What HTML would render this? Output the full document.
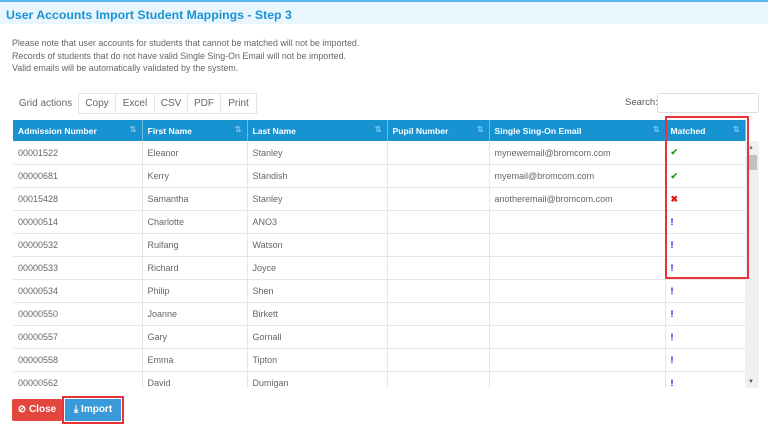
<!DOCTYPE html>
<html><head><meta charset="utf-8"><style>
*{box-sizing:border-box;margin:0;padding:0}
body{width:768px;height:432px;background:#fff;font-family:"Liberation Sans",sans-serif;position:relative;overflow:hidden;color:#555}
.title{position:absolute;left:0;top:0;width:768px;height:24px;background:#eaf6fd;border-top:2px solid #5bb8e8;color:#1a93d4;font-size:12.3px;font-weight:bold;padding:6px 0 0 6px}
.note{position:absolute;left:12px;top:37px;font-size:8.9px;line-height:12.5px;color:#666}
.ga{position:absolute;top:93px;height:21px;font-size:10px;color:#666;line-height:20px;text-align:center}
.btn{border:1px solid #e6e6e6;border-left:none}
.search{position:absolute;left:625px;top:97px;font-size:9.5px;color:#555}
.sin{position:absolute;left:657px;top:93px;width:102px;height:20px;border:1px solid #ddd;border-radius:2px}
table{position:absolute;left:13px;top:120px;border-collapse:collapse;font-size:9px;table-layout:fixed}
th{background:#1793d1;color:#fff;text-align:left;font-weight:bold;height:21px;padding-left:5px;border-right:1px solid #6bbbe4;position:relative;font-size:8.6px}
th::after{content:"⇅";position:absolute;right:5px;top:5px;color:#7cc3e8;font-size:8px}
td{height:23px;padding-left:5px;padding-top:1px;border-right:1px solid #e6e6e6;border-bottom:1px solid #e6e6e6;color:#666}
.wrap{position:absolute;left:13px;top:141px;width:746px;height:247px;overflow:hidden}
.wrap table{left:0;top:0}
.sb{position:absolute;left:745px;top:141px;width:14px;height:247px;background:#f0f0f0}
.ok{color:#1a9a1a;font-weight:bold}
.x{color:#e02020;font-weight:bold}
.ex{color:#1010e0;font-weight:bold}
.rb{position:absolute;border:2px solid #e8333a}
.bclose{position:absolute;left:12px;top:399px;width:50px;height:22px;background:#e2463c;color:#fff;font-size:10px;font-weight:bold;line-height:22px;text-align:center;border-radius:2px}
.bimp{position:absolute;left:65px;top:399px;width:56px;height:22px;background:#3a9ad9;color:#fff;font-size:10px;font-weight:bold;line-height:22px;text-align:center}
</style></head><body>
<div class="title">User Accounts Import Student Mappings - Step 3</div>
<div class="note">Please note that user accounts for students that cannot be matched will not be imported.<br>Records of students that do not have valid Single Sing-On Email will not be imported.<br>Valid emails will be automatically validated by the system.</div>
<div class="ga" style="left:13px;width:65px;line-height:22px">Grid actions</div>
<div class="ga btn" style="left:78px;width:38px;border-left:1px solid #e6e6e6">Copy</div>
<div class="ga btn" style="left:116px;width:39px">Excel</div>
<div class="ga btn" style="left:155px;width:33px">CSV</div>
<div class="ga btn" style="left:188px;width:33px">PDF</div>
<div class="ga btn" style="left:221px;width:36px">Print</div>
<div class="search">Search:</div><div class="sin"></div>
<table><colgroup><col style="width:129px"><col style="width:105px"><col style="width:140px"><col style="width:102px"><col style="width:176px"><col style="width:80px"></colgroup>
<tr><th>Admission Number</th><th>First Name</th><th>Last Name</th><th>Pupil Number</th><th>Single Sing-On Email</th><th>Matched</th></tr></table>
<div class="wrap"><table><colgroup><col style="width:129px"><col style="width:105px"><col style="width:140px"><col style="width:102px"><col style="width:176px"><col style="width:80px"></colgroup>
<tr><td>00001522</td><td>Eleanor</td><td>Stanley</td><td></td><td>mynewemail@bromcom.com</td><td class="ok">✔</td></tr>
<tr><td>00000681</td><td>Kerry</td><td>Standish</td><td></td><td>myemail@bromcom.com</td><td class="ok">✔</td></tr>
<tr><td>00015428</td><td>Samantha</td><td>Stanley</td><td></td><td>anotheremail@bromcom.com</td><td class="x">✖</td></tr>
<tr><td>00000514</td><td>Charlotte</td><td>ANO3</td><td></td><td></td><td class="ex">!</td></tr>
<tr><td>00000532</td><td>Ruifang</td><td>Watson</td><td></td><td></td><td class="ex">!</td></tr>
<tr><td>00000533</td><td>Richard</td><td>Joyce</td><td></td><td></td><td class="ex">!</td></tr>
<tr><td>00000534</td><td>Philip</td><td>Shen</td><td></td><td></td><td class="ex">!</td></tr>
<tr><td>00000550</td><td>Joanne</td><td>Birkett</td><td></td><td></td><td class="ex">!</td></tr>
<tr><td>00000557</td><td>Gary</td><td>Gornall</td><td></td><td></td><td class="ex">!</td></tr>
<tr><td>00000558</td><td>Emma</td><td>Tipton</td><td></td><td></td><td class="ex">!</td></tr>
<tr><td>00000562</td><td>David</td><td>Dumigan</td><td></td><td></td><td class="ex">!</td></tr>
</table></div>
<div class="sb"><div style="position:absolute;left:3px;top:4px;font-size:6px;color:#777">▲</div><div style="position:absolute;left:3px;top:14px;width:9px;height:15px;background:#c1c1c1"></div><div style="position:absolute;left:3px;bottom:3px;font-size:6px;color:#555">▼</div></div>
<div class="rb" style="left:665px;top:116px;width:84px;height:163px"></div>
<div class="bclose">⊘ Close</div>
<div class="bimp">⤓ Import</div>
<div class="rb" style="left:62px;top:396px;width:62px;height:28px"></div>
</body></html>
